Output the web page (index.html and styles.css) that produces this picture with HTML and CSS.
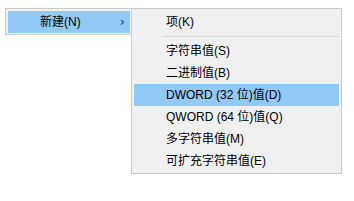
FILE: index.html
```html
<!DOCTYPE html>
<html lang="zh-CN">
<head>
<meta charset="utf-8">
<link rel="stylesheet" href="styles.css">
</head>
<body>
<div class="stage">
  <div class="menu parent">
    <div class="item active has-sub"><span class="label">新建(N)</span><span class="arrow">›</span></div>
  </div>
  <div class="menu sub">
    <div class="item"><span class="label">项(K)</span></div>
    <div class="sep"></div>
    <div class="item"><span class="label">字符串值(S)</span></div>
    <div class="item"><span class="label">二进制值(B)</span></div>
    <div class="item active"><span class="label">DWORD (32 位)值(D)</span></div>
    <div class="item"><span class="label">QWORD (64 位)值(Q)</span></div>
    <div class="item"><span class="label">多字符串值(M)</span></div>
    <div class="item"><span class="label">可扩充字符串值(E)</span></div>
  </div>
</div>
</body>
</html>
```

FILE: styles.css
```css
html, body {
  margin: 0;
  padding: 0;
  background: #ffffff;
}
body {
  width: 354px;
  height: 201px;
  overflow: hidden;
  font-family: "Liberation Sans", "Noto Sans CJK SC", sans-serif;
  font-size: 12px;
  color: #000000;
}
.stage {
  display: flex;
  align-items: flex-start;
  padding: 8px 0 0 5px;
}
.menu {
  background: #f0f0f0;
  border: 1px solid #cccccc;
  box-sizing: border-box;
}
.parent {
  width: 128px;
  padding: 2px 2px 1px 2px;
}
.sub {
  width: 211px;
  margin-left: -2px;
  padding: 2px 2px 1px 2px;
  position: relative;
  z-index: 1;
}
.item {
  height: 22px;
  line-height: 22px;
  padding-left: 32px;
  display: flex;
  align-items: center;
  white-space: nowrap;
}
.item.active {
  background: #91c9f7;
}
.has-sub {
  justify-content: space-between;
  padding-right: 5px;
}
.arrow {
  font-family: "DejaVu Sans", sans-serif;
  font-size: 13px;
  color: #333333;
  line-height: 22px;
}
.sep {
  height: 1px;
  background: #d7d7d7;
  margin: 3px 0 3px 28px;
}
```
